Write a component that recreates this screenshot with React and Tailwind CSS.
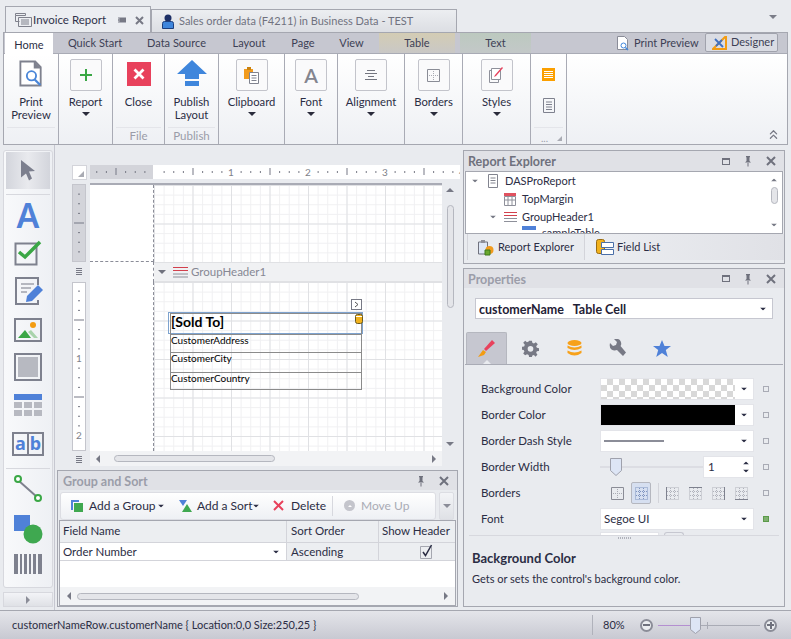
import { ChevronsUp } from 'lucide-react';

const Tri = ({ dir = 'down', className = '' }) => {
  const pts = { down: '0,0 8,0 4,4', up: '0,4 8,4 4,0', left: '4,0 4,8 0,4', right: '0,0 0,8 4,4' }[dir];
  const vert = dir === 'left' || dir === 'right';
  return (
    <svg width={vert ? 4 : 8} height={vert ? 8 : 4} className={`shrink-0 ${className}`}>
      <polygon points={pts} fill="currentColor" />
    </svg>
  );
};

const PanelCtl = ({ max = true }) => (
  <div className="flex items-center gap-[12px] text-[#6f717d]">
    {max && <div className="w-[8px] h-[7px] border border-[#6f717d] border-t-2" />}
    <svg width="12" height="12" viewBox="0 0 12 12"><path d="M4 1h4v1l-.5.5V6L9 7.5H3L4.500 6V2.500L4 2zM5.500 8h1v3.500h-1z" fill="currentColor" /></svg>
    <svg width="10" height="10" viewBox="0 0 10 10"><path d="M1 1l8 8M9 1l-8 8" stroke="currentColor" strokeWidth="2" /></svg>
  </div>
);

const PageIcon = ({ size = 14 }) => (
  <svg width={size} height={size} viewBox="0 0 14 14" fill="none" stroke="#82848f"><path d="M2.500.5h9v13h-9zM4.500 4h5M4.500 6.500h5M4.500 9h5" /></svg>
);

function RibbonGroup({ w, caption, children, last }) {
  return (
    <div className={`flex flex-col items-center h-full relative ${last ? '' : 'border-r border-[#a9abb5]'} ${w}`}>
      {children}
      {caption && (
        <div className="absolute left-[3px] right-[3px] top-[73px] text-center pt-[1px] h-[17px] leading-[14px] text-[#9a9ca8] text-[11.500px] border-t border-[#e4e5ea]">{caption}</div>
      )}
    </div>
  );
}

function BoxButton({ label, children }) {
  return (
    <>
      <div className="mt-[5px] w-[32px] h-[32px] border border-[#c3c4cb] rounded-[2px] flex items-center justify-center bg-[#fafafb]">{children}</div>
      <div className="leading-[16px] mt-[3px]">{label}</div>
      <Tri className="mt-[2px] text-[#2b2c3c]" />
    </>
  );
}

function DocTabs() {
  return (
    <div className="h-[32px] flex items-end pl-[5px] relative shrink-0">
      <div className="w-[146px] h-[26px] border border-b-0 border-[#a5a7b0] bg-[#eceef2] flex items-center pl-[9px] pt-[1px] relative z-10">
        <svg width="17" height="14" viewBox="0 0 17 14" fill="none" stroke="#7f818c"><path d="M.5.500h10v2h-10zM.5 2.500v6h4M3.500 4.500h13v9h-13zM6 7h8M6 9h8M6 11h8" /></svg>
        <span className="ml-[1px] w-[85px] text-[#30324a]">Invoice Report</span>
        <svg width="8" height="8" viewBox="0 0 8 8"><path d="M1 1v6M1 4h-1M2 2h6v4H2z" fill="#777985" stroke="#777985" /></svg>
        <svg className="ml-[9px]" width="9" height="9" viewBox="0 0 9 9"><path d="M1 1l7 7M8 1l-7 7" stroke="#777985" strokeWidth="2" /></svg>
      </div>
      <div className="w-[306px] h-[23px] border border-b-0 border-[#a5a7b0] bg-gradient-to-b from-[#eceef1] to-[#dcdee3] flex items-center pl-[10px]">
        <svg width="12" height="15" viewBox="0 0 12 15"><circle cx="6" cy="4" r="3.500" fill="#1d2f66" /><path d="M.5 14.500V9.500q0-2 2-2h7q2 0 2 2v5z" fill="#3f86dc" stroke="#1d3f7e" /></svg>
        <span className="ml-[5px] text-[11px] text-[#70727f]">Sales order data (F4211) in Business Data - TEST</span>
      </div>
      <Tri className="absolute left-[769px] top-[15px] text-[#7b7d88]" />
    </div>
  );
}

function Ribbon() {
  return (
    <div className="ml-[3px] w-[785px] h-[113px] border border-[#a5a7b0] flex flex-col shrink-0 relative">
      <div className="h-[21px] bg-[#c6c7d0] flex items-end relative text-[11px] text-[#3d3f55] shrink-0 border-b border-[#a9abb5]">
        <div className="ml-[1px] w-[48px] h-[21px] -mb-[1px] bg-white text-center leading-[23px] text-[#2b2d44] z-10">Home</div>
        <div className="flex h-full items-center text-center pt-[1px]">
          <span className="w-[84px]">Quick Start</span>
          <span className="w-[79px]">Data Source</span>
          <span className="w-[66px]">Layout</span>
          <span className="w-[42px]">Page</span>
          <span className="w-[55px]">View</span>
        </div>
        <div className="w-[76px] h-full pt-[1px] bg-gradient-to-b from-[#d3ccb4] to-[#c9c8c6] flex items-center justify-center">Table</div>
        <div className="ml-[5px] w-[71px] h-full pt-[1px] bg-gradient-to-b from-[#bcc9bf] to-[#c3c8c8] flex items-center justify-center">Text</div>
        <div className="flex h-full items-center ml-[85px] w-[89px]">
          <svg width="14" height="15" viewBox="0 0 14 15" fill="none"><path d="M1.500.5h7l3 3v10h-10z" fill="#fff" stroke="#8a8c98" /><circle cx="7.500" cy="9.500" r="2.500" stroke="#3f86dc" /><path d="M9.500 11.500l2.500 2.500" stroke="#3f86dc" strokeWidth="1.500" /></svg>
          <span className="ml-[4px]">Print Preview</span>
        </div>
        <div className="w-[73px] h-[19px] mb-[1px] border border-[#a0a2ac] rounded-[2px] bg-[#dadce3] flex items-center pl-[6px]">
          <svg width="15" height="14" viewBox="0 0 15 14"><path d="M14 0v13H1z" fill="none" stroke="#f39c12" strokeWidth="2" /><path d="M3 3l8 8M10 4l-6 6" stroke="#3f6fc0" strokeWidth="1.800" /></svg>
          <span className="ml-[4px]">Designer</span>
        </div>
      </div>
      <div className="flex-1 bg-gradient-to-b from-white to-[#eef0f4] flex text-[11.250px] text-[#2b2d44]">
        <RibbonGroup w="w-[55px]">
          <svg className="mt-[6px]" width="24" height="27" viewBox="0 0 26 29" fill="none"><path d="M1.500 1.500h16l6 6v20h-22z" stroke="#7e818e" strokeWidth="2" fill="#fff" /><path d="M16 1l8 8h-8z" fill="#7e818e" /><circle cx="13.500" cy="17" r="5" stroke="#4a86d8" strokeWidth="2" fill="#fff" /><path d="M17 21l6 6" stroke="#4a86d8" strokeWidth="2.500" /></svg>
          <div className="text-center leading-[13px] mt-[8px]">Print<br />Preview</div>
          <div className="absolute left-[3px] right-[3px] top-[73px] border-t border-[#e4e5ea]" />
        </RibbonGroup>
        <RibbonGroup w="w-[54px]">
          <BoxButton label="Report">
            <svg width="14" height="14" viewBox="0 0 14 14"><path d="M7 1v12M1 7h12" stroke="#3aa745" strokeWidth="2" /></svg>
          </BoxButton>
        </RibbonGroup>
        <RibbonGroup w="w-[52px]" caption="File">
          <div className="mt-[8px] w-[24px] h-[24px] bg-[#e8415c] flex items-center justify-center">
            <svg width="12" height="12" viewBox="0 0 12 12"><path d="M1.500 1.500l9 9M10.500 1.500l-9 9" stroke="#fff" strokeWidth="2.800" /></svg>
          </div>
          <div className="mt-[8px] leading-[16px]">Close</div>
        </RibbonGroup>
        <RibbonGroup w="w-[54px]" caption="Publish">
          <svg className="mt-[6px]" width="30" height="27" viewBox="0 0 30 27"><path d="M15 0l15 14H22v5H8v-5H0z" fill="#3f86dc" /><path d="M8 21h14v5H8z" fill="#3f86dc" /></svg>
          <div className="text-center leading-[13px] mt-[8px]">Publish<br />Layout</div>
        </RibbonGroup>
        <RibbonGroup w="w-[66px]">
          <BoxButton label="Clipboard">
            <svg width="15" height="17" viewBox="0 0 15 17"><path d="M0 2h9v10H0z" fill="#f29b1d" /><path d="M3 0h4v3H3z" fill="#c9820f" /><path d="M5.500 5.500h9v11h-9z" fill="#fff" stroke="#80838f" /><path d="M7.500 8.500h5M7.500 11h5M7.500 13.500h5" stroke="#80838f" /></svg>
          </BoxButton>
        </RibbonGroup>
        <RibbonGroup w="w-[53px]">
          <BoxButton label="Font">
            <span className="text-[20px] leading-none font-semibold text-[#83858f]">A</span>
          </BoxButton>
        </RibbonGroup>
        <RibbonGroup w="w-[67px]">
          <BoxButton label="Alignment">
            <svg width="12" height="11" viewBox="0 0 12 11"><path d="M2 .5h8M0 3.500h12M3 6.500h6M0 9.500h12" stroke="#73757f" /></svg>
          </BoxButton>
        </RibbonGroup>
        <RibbonGroup w="w-[58px]">
          <BoxButton label="Borders">
            <svg width="13" height="13" viewBox="0 0 13 13" fill="none"><path d="M.5.5h12v12H.5z" stroke="#8a8c96" /><path d="M6.500 2v9M2 6.500h9" stroke="#a9abb3" strokeDasharray="1 1" /></svg>
          </BoxButton>
        </RibbonGroup>
        <RibbonGroup w="w-[68px]">
          <BoxButton label="Styles">
            <svg width="15" height="16" viewBox="0 0 15 16" fill="none"><path d="M.5 3.500h9v12h-9z" stroke="#8e909a" /><path d="M2.500 1.500h9v11h-9z" stroke="#8e909a" fill="#fff" /><path d="M5 10l2-1 7-8-1-1-7 8z" fill="#e8415c" /></svg>
          </BoxButton>
        </RibbonGroup>
        <RibbonGroup w="w-[36px]">
          <div className="mt-[14px] w-[13px] h-[13px] bg-[#fb9f00] flex items-center justify-center">
            <svg width="9" height="9" viewBox="0 0 9 9"><path d="M0 1.500h9M0 3.500h9M0 5.500h9M0 7.500h9" stroke="#fff" /></svg>
          </div>
          <svg className="mt-[17px]" width="12" height="15" viewBox="0 0 12 15" fill="none"><path d="M.5.500h11v14H.5zM3 4h6M3 6.500h6M3 9h6M3 11.500h6" stroke="#7e818e" /></svg>
          <div className="absolute left-[3px] right-[3px] top-[73px] h-[17px] border-t border-[#e4e5ea] flex items-end justify-between pl-[7px] pr-[1px] pb-[3px] text-[#9a9ca8]">
            <span className="leading-[6px] text-[10px]">...</span>
            <svg width="5" height="5"><polygon points="5,0 5,5 0,5" fill="#a9abb3" /></svg>
          </div>
        </RibbonGroup>
        <div className="flex-1 flex items-end justify-end pr-[6px] pb-[2px]">
          <ChevronsUp size={15} strokeWidth={2} className="text-[#767884]" />
        </div>
      </div>
    </div>
  );
}

function Toolbox() {
  const Item = ({ h, children }) => (
    <div className={`flex items-center justify-center ${h}`}>{children}</div>
  );
  return (
    <div className="w-[50px] ml-[3px] flex flex-col shrink-0 text-[#4f81d8]">
      <div className="h-[438px] border border-[#d7d8de] rounded-[3px] bg-gradient-to-r from-[#f8f9fb] to-[#eef0f4] flex flex-col px-[2px] pt-[1px] overflow-hidden">
        <Item h="h-[37px] shrink-0 bg-gradient-to-r from-[#d3d5dc] via-[#e9eaee] to-[#d3d5dc]">
          <svg width="15" height="21" viewBox="0 0 15 21"><path d="M0 0l14 11-6 .5 3 7-3 2-3-7-5 4z" fill="#7c7f8e" /></svg>
        </Item>
        <div className="h-[2px] shrink-0 border-t border-[#d7d8de] mt-[5px]" />
        <Item h="h-[38px] shrink-0"><span className="text-[34px] leading-none font-semibold font-['Noto_Sans']">A</span></Item>
        <Item h="h-[37px] shrink-0">
          <svg width="28" height="26" viewBox="0 0 28 26" fill="none"><path d="M1.500 3.500h21v21h-21z" stroke="#7e818e" strokeWidth="2" /><path d="M5 12l6 5L26 2" stroke="#3aa745" strokeWidth="3.500" /></svg>
        </Item>
        <Item h="h-[40px] shrink-0">
          <svg className="ml-[3px]" width="29" height="28" viewBox="0 0 29 28" fill="none"><path d="M23 8V1H1v26h22v-4" stroke="#7e818e" strokeWidth="2" /><path d="M6 7h13M6 11h10M6 15h6" stroke="#b5b7bf" strokeWidth="2" /><path d="M11 25l1-6L23 8l5 5-11 11z" fill="#4f81d8" /></svg>
        </Item>
        <Item h="h-[37px] shrink-0">
          <svg width="28" height="24" viewBox="0 0 28 24" fill="none"><path d="M1 1h26v22H1z" stroke="#7e818e" strokeWidth="2" /><circle cx="19" cy="7" r="3" fill="#f39c12" /><path d="M4 20l7-8 6 8z" fill="#3aa745" /><path d="M14 14l3-2 7 8h-4z" fill="#a9d3ac" /></svg>
        </Item>
        <Item h="h-[38px] shrink-0">
          <svg width="28" height="28" viewBox="0 0 28 28"><path d="M1 1h26v26H1z" fill="none" stroke="#7e818e" strokeWidth="2" /><path d="M4 4h20v20H4z" fill="#b7b9c1" /></svg>
        </Item>
        <Item h="h-[37px] shrink-0">
          <svg width="28" height="22" viewBox="0 0 28 22"><path d="M0 0h28v6H0z" fill="#4f81d8" /><path d="M0 8h8v6H0zM10 8h8v6h-8zM20 8h8v6h-8zM0 16h8v6H0zM10 16h8v6h-8zM20 16h8v6h-8z" fill="#b7b9c1" /></svg>
        </Item>
        <Item h="h-[41px] shrink-0">
          <div className="w-[32px] h-[24px] border-2 border-[#7e818e] flex text-[18px] leading-[19px] font-bold font-['Noto_Sans']">
            <span className="flex-1 text-center border-r-2 border-[#7e818e]">a</span>
            <span className="flex-1 text-center">b</span>
          </div>
        </Item>
        <div className="h-[1px] shrink-0 bg-[#d7d8de] mt-[4px]" />
        <Item h="h-[40px] shrink-0">
          <svg width="30" height="28" viewBox="0 0 30 28" fill="none"><path d="M6 6l18 16" stroke="#7e818e" strokeWidth="2" /><circle cx="5" cy="4" r="3" stroke="#3aa745" strokeWidth="2" fill="#fff" /><circle cx="25" cy="23" r="3" stroke="#3aa745" strokeWidth="2" fill="#fff" /></svg>
        </Item>
        <Item h="h-[40px] shrink-0">
          <svg width="29" height="29" viewBox="0 0 29 29"><path d="M0 0h16v16H0z" fill="#4f81d8" /><circle cx="19" cy="19" r="9.500" fill="#3fa850" /></svg>
        </Item>
        <Item h="h-[30px] shrink-0">
          <svg width="28" height="20" viewBox="0 0 28 20"><path d="M0 0h4v20H0zM6 0h2v20H6zM10 0h3v20h-3zM15 0h2v20h-2zM19 0h3v20h-3zM24 0h4v20h-4z" fill="#7e818e" /></svg>
        </Item>
      </div>
      <div className="mt-[4px] h-[15px] border border-[#d7d8de] bg-gradient-to-b from-[#f3f4f7] to-[#dfe1e6] flex items-center justify-center text-[#8b8d98]">
        <Tri dir="right" />
      </div>
    </div>
  );
}

function HRuler() {
  const base = 64;
  const step = 9.625;
  const marks = Array.from({ length: 45 }, (_, i) => i - 6);
  return (
    <svg width="370" height="14" className="block">
      <rect width="370" height="14" fill="#fff" />
      <rect width="63" height="14" fill="#d3d4da" />
      {marks.map((k) => {
        const x = base + k * step;
        if (k === 0 || x < 2) return null;
        if (k % 8 === 0 && k > 0) return <text key={k} x={x} y="11" fontSize="10" textAnchor="middle" fill="#7d7f8a">{k / 8}</text>;
        if (k % 4 === 0) return <rect key={k} x={x} y="3" width="1" height="7" fill="#777985" />;
        return <rect key={k} x={x} y="6" width="1" height="2" fill="#777985" />;
      })}
    </svg>
  );
}

function VRuler({ h, origin, gray }) {
  const marks = Array.from({ length: 22 }, (_, i) => i + 1);
  return (
    <svg width="14" height={h} className="block border border-[#c4c5cc]">
      <rect width="14" height={h} fill={gray ? '#d3d4da' : '#fff'} />
      {marks.map((k) => {
        const y = origin + k * 9.625;
        if (y > h - 8) return null;
        if (k % 8 === 0) return <text key={k} x="6" y={y + 4} fontSize="10" textAnchor="middle" fill="#7d7f8a">{k / 8}</text>;
        if (k % 4 === 0) return <rect key={k} x="1" y={y} width="10" height="1" fill="#777985" />;
        return <rect key={k} x="5" y={y} width="2" height="1" fill="#777985" />;
      })}
    </svg>
  );
}

const Grip = () => (
  <svg width="8" height="8" viewBox="0 0 8 8" className="text-[#777985]"><path d="M1 .5h6M1 2.500h6M1 4.500h6M1 6.500h6" stroke="currentColor" /></svg>
);

const gridBg = "bg-[linear-gradient(#e0e1e4_1px,transparent_1px),linear-gradient(90deg,#e0e1e4_1px,transparent_1px),linear-gradient(#f0f0f2_1px,transparent_1px),linear-gradient(90deg,#f0f0f2_1px,transparent_1px)] bg-[size:38.5px_38.5px,38.5px_38.5px,9.625px_9.625px,9.625px_9.625px]";

function Designer() {
  return (
    <div className="h-[321px] flex shrink-0">
      <div className="w-[35px] flex flex-col items-center pl-[16px] pr-[3px] shrink-0">
        <div className="mt-[20px] w-[15px] h-[15px] shrink-0 bg-white border border-[#d3d4da] flex items-end justify-end p-[2px]">
          <svg width="6" height="6"><polygon points="6,0 6,6 0,6" fill="#a9abb3" /></svg>
        </div>
        <div className="mt-[4px]"><VRuler h={78} origin={-1} gray /></div>
        <div className="h-[20px] flex items-center"><Grip /></div>
        <VRuler h={169} origin={-2} />
        <div className="mt-[5px]"><Grip /></div>
      </div>
      <div className="flex-1 flex flex-col min-w-0">
        <div className="mt-[20px] h-[18px] shrink-0 w-[370px]"><HRuler /></div>
        <div className="h-[268px] flex shrink-0">
          <div className="w-[352px] border-t-2 border-[#a9abb5] flex flex-col bg-white">
            <div className="h-[77px] flex">
              <div className="w-[64px] border-r border-b border-dashed border-[#8b8d98]" />
              <div className={`flex-1 ${gridBg}`} />
            </div>
            <div className="h-[20px] flex">
              <div className="w-[64px] border-r border-dashed border-[#8b8d98]" />
              <div className="flex-1 bg-[#f0f1f3] border-y border-[#e0e1e4] flex items-center pl-[4px] text-[#868894]">
                <Tri className="text-[#6f717d]" />
                <svg className="ml-[7px]" width="15" height="11" viewBox="0 0 15 11"><path d="M0 .5h15M0 3.500h15" stroke="#d2404d" /><path d="M0 7h15M0 10h15" stroke="#8e909a" /></svg>
                <span className="ml-[3px]">GroupHeader1</span>
              </div>
            </div>
            <div className="flex-1 flex">
              <div className="w-[64px] border-r border-dashed border-[#8b8d98]" />
              <div className={`flex-1 relative ${gridBg}`}>
                <div className="absolute left-[197px] top-[17px] w-[11px] h-[11px] bg-white border border-[#777985] flex items-center justify-center">
                  <svg width="5" height="7" viewBox="0 0 5 7" fill="none"><path d="M1 1l3 2.500L1 6" stroke="#555" /></svg>
                </div>
                <div className="absolute left-[14px] top-[30px] w-[195px] h-[22px] border border-[#7ea3cf]" />
                <div className="absolute left-[16px] top-[31px] w-[192px] h-[77px] border border-[#8b8b8b] flex flex-col text-black text-[10px]">
                  <div className="h-[21px] border-b border-[#8b8b8b] font-bold text-[14px] leading-[16px]">[Sold To]</div>
                  <div className="h-[18px] border-b border-[#8b8b8b] leading-[11px]">CustomerAddress</div>
                  <div className="h-[20px] border-b border-[#8b8b8b] leading-[11px]">CustomerCity</div>
                  <div className="flex-1 leading-[10px]">CustomerCountry</div>
                </div>
                <svg className="absolute left-[201px] top-[32px]" width="8" height="10" viewBox="0 0 8 10"><rect x=".5" y=".5" width="7" height="9" rx="2" fill="#f2b21c" stroke="#6b5a20" /><path d="M1 2.500h6" stroke="#fff" /></svg>
              </div>
            </div>
          </div>
          <div className="w-[16px] flex flex-col items-center text-[#777985] pt-[5px] pb-[5px]">
            <Tri dir="up" />
            <div className="mt-[13px] w-[7px] h-[103px] rounded-[4px] border border-[#b5b7bf] bg-[#e4e5e9]" />
            <div className="mt-auto"><Tri /></div>
          </div>
        </div>
        <div className="h-[15px] w-[352px] bg-[#f2f3f5] flex items-center pl-[6px] text-[#777985] shrink-0">
          <Tri dir="left" />
          <div className="ml-[14px] w-[161px] h-[7px] rounded-[4px] border border-[#b5b7bf] bg-[#e4e5e9]" />
          <div className="ml-auto mr-[6px]"><Tri dir="right" /></div>
        </div>
      </div>
    </div>
  );
}

function GroupSort() {
  return (
    <div className="mt-[4px] ml-[2px] w-[401px] h-[137px] border border-[#a5a7b0] flex flex-col shrink-0">
      <div className="h-[19px] bg-[#e0e1e6] flex items-center justify-between pl-[5px] pr-[8px] shrink-0">
        <span className="font-bold text-[12.500px] leading-[15px] pt-[2px] text-[#9b9da9]">Group and Sort</span>
        <PanelCtl max={false} />
      </div>
      <div className="h-[30px] flex items-center pl-[2px] pt-[1px] shrink-0 bg-[#e9ebef]">
        <div className="w-[376px] h-[28px] rounded-[3px] border border-[#dcdde3] bg-gradient-to-b from-white to-[#eef0f4] flex items-center pl-[10px] text-[12px] text-[#2b2d44]">
          <svg width="12" height="12" viewBox="0 0 12 12"><path d="M0 0h8v2H2v8H0z" fill="#4f81d8" /><path d="M3 3h9v9H3z" fill="#3fa850" /></svg>
          <span className="ml-[6px] w-[68px]">Add a Group</span>
          <Tri className="scale-75" />
          <svg className="ml-[14px]" width="13" height="12" viewBox="0 0 13 12"><path d="M0 0h8L4 6z" fill="#4f81d8" /><path d="M8 4l5 8H3z" fill="#3fa850" /></svg>
          <span className="ml-[5px] w-[55px]">Add a Sort</span>
          <Tri className="scale-75" />
          <svg className="ml-[13px]" width="11" height="11" viewBox="0 0 11 11"><path d="M1 1l9 9M10 1l-9 9" stroke="#e8415c" strokeWidth="2" /></svg>
          <span className="ml-[7px] w-[33px]">Delete</span>
          <div className="ml-[8px] w-px h-[20px] bg-[#d7d8de]" />
          <div className="ml-[11px] w-[11px] h-[11px] rounded-full bg-[#c4c5cc] flex items-center justify-center">
            <Tri dir="up" className="text-white scale-50" />
          </div>
          <span className="ml-[6px] text-[#a9abb5]">Move Up</span>
        </div>
        <div className="ml-[3px] w-[15px] h-[28px] rounded-[2px] border border-[#dcdde3] bg-gradient-to-b from-[#f3f4f7] to-[#dfe1e6] flex items-center justify-center text-[#8b8d98]">
          <Tri />
        </div>
      </div>
      <div className="mx-[1px] flex-1 border border-[#a5a7b0] bg-white flex flex-col text-[#2b2d44] min-h-0">
        <div className="h-[21px] flex bg-[#eceef1] shrink-0">
          <div className="w-[227px] pl-[3px] border-r border-[#d3d4da] leading-[20px]">Field Name</div>
          <div className="w-[92px] pl-[4px] border-r border-[#d3d4da] leading-[20px]">Sort Order</div>
          <div className="flex-1 pl-[3px] leading-[20px]">Show Header</div>
        </div>
        <div className="h-[19px] flex border-y border-[#d3d4da] shrink-0">
          <div className="w-[227px] pl-[3px] pr-[6px] border-r border-[#d3d4da] flex items-center justify-between">
            <span>Order Number</span><Tri className="scale-75" />
          </div>
          <div className="w-[92px] pl-[4px] border-r border-[#d3d4da] bg-[#eceef1] leading-[17px]">Ascending</div>
          <div className="flex-1 bg-[#eceef1] flex items-center justify-center pl-[18px]">
            <svg width="13" height="15" viewBox="0 0 13 15" fill="none"><path d="M.5 2.500h11v12H.5z" stroke="#a5a7b0" /><path d="M3 8l2.500 3.500L11.500 1" stroke="#2b2d44" strokeWidth="1.500" /></svg>
          </div>
        </div>
        <div className="flex-1" />
        <div className="h-[18px] bg-[#f2f3f5] flex items-center pl-[7px] pr-[7px] text-[#777985] shrink-0">
          <Tri dir="left" />
          <div className="ml-[6px] w-[282px] h-[7px] rounded-[4px] border border-[#b5b7bf] bg-[#e4e5e9]" />
          <div className="ml-auto"><Tri dir="right" /></div>
        </div>
      </div>
    </div>
  );
}

function ReportExplorer() {
  return (
    <div className="h-[114px] border border-[#a5a7b0] flex flex-col text-[11px] text-[#2b2d44] shrink-0">
      <div className="h-[20px] bg-[#e0e1e6] flex items-center justify-between pl-[4px] pr-[8px] shrink-0">
        <span className="font-bold text-[12.500px] leading-[15px] pt-[1px] text-[#6f717d]">Report Explorer</span>
        <PanelCtl />
      </div>
      <div className="mx-[1px] h-[63px] border border-[#a5a7b0] bg-white flex overflow-hidden shrink-0">
        <div className="flex-1 flex flex-col relative">
          <div className="h-[18px] flex items-center pl-[5px] shrink-0"><Tri className="text-[#777985] scale-75" /><div className="ml-[7px]"><PageIcon /></div><span className="ml-[5px]">DASProReport</span></div>
          <div className="h-[18px] flex items-center pl-[38px] shrink-0">
            <svg width="12" height="13" viewBox="0 0 12 13" fill="none"><path d="M.5 3.500h11v9H.5zM4 3.500v9M8 3.500v9M.5 7h11" stroke="#8e909a" /><path d="M0 0h12v3H0z" fill="#e0525f" /></svg>
            <span className="ml-[6px]">TopMargin</span>
          </div>
          <div className="h-[18px] flex items-center pl-[23px] shrink-0"><Tri className="text-[#777985] scale-75" /><svg className="ml-[7px]" width="13" height="11" viewBox="0 0 13 11"><path d="M0 .5h13M0 3.500h13" stroke="#d2404d" /><path d="M0 6.500h13M0 9.500h13" stroke="#8e909a" /></svg><span className="ml-[5px]">GroupHeader1</span></div>
          <div className="h-[18px] flex items-start pl-[56px] shrink-0"><div className="w-[14px] h-[4px] bg-[#4f81d8]" /><span className="ml-[6px] -mt-[1px]">sampleTable</span></div>
        </div>
        <div className="w-[16px] flex flex-col items-center pt-[6px] pb-[6px] text-[#777985]">
          <Tri dir="up" className="scale-75" />
          <div className="mt-[5px] w-[7px] h-[17px] rounded-[4px] border border-[#b5b7bf] bg-[#e4e5e9]" />
          <div className="mt-auto"><Tri className="scale-75" /></div>
        </div>
      </div>
      <div className="h-[26px] flex items-stretch pl-[3px]">
        <div className="w-[118px] flex items-center pl-[9px] border-l border-[#d3d4da] border-r">
          <svg width="17" height="17" viewBox="0 0 17 17" fill="none"><path d="M1.500 3h9v12h-9z" stroke="#6f717d" fill="#dfe8f7" /><path d="M4 1h4v3H4z" fill="#8e909a" /><circle cx="12.500" cy="11" r="4" fill="#f29b1d" /><path d="M8 11h5v5H8z" fill="#6aa82f" stroke="#3d7a1a" /></svg>
          <span className="ml-[4px]">Report Explorer</span>
        </div>
        <div className="flex-1 flex items-center pl-[11px] bg-gradient-to-r from-[#eceef2] to-[#e0e1e6]">
          <svg width="18" height="16" viewBox="0 0 18 16" fill="none"><rect x=".5" y=".5" width="8" height="14" rx="2" fill="#f2b21c" stroke="#9a6b10" /><path d="M5.500 3.500h12v5h-12zM5.500 10.500h12v5h-12z" fill="#fff" stroke="#4a6fa8" /></svg>
          <span className="ml-[3px]">Field List</span>
        </div>
      </div>
    </div>
  );
}

function PropRow({ label, marker, children, h = 'h-[26px]' }) {
  return (
    <div className={`${h} flex items-center shrink-0`}>
      <div className="w-[136px] pl-[17px]">{label}</div>
      <div className="w-[154px] flex items-center">{children}</div>
      <div className={`ml-[9px] w-[6px] h-[6px] border ${marker ? 'border-[#5b9a4a] bg-[#7fb06f]' : 'border-[#a9abb5]'}`} />
    </div>
  );
}

function Combo({ children, className = '' }) {
  return (
    <div className="w-[154px] h-[22px] bg-white border border-[#e3e4e9] flex items-center text-[#2b2d44]">
      <div className={`flex-1 h-full min-w-0 ${className}`}>{children}</div>
      <Tri className="mx-[5px] scale-75 text-[#2b2d44]" />
    </div>
  );
}

function BorderGlyph({ side }) {
  const solid = { left: 'M.5 0v13', top: 'M0 .5h13', right: 'M12.500 0v13', bottom: 'M0 12.500h13' }[side];
  return (
    <svg width="13" height="13" viewBox="0 0 13 13" fill="none">
      <path d="M.5.5h12v12H.5zM4.500 1v11M8.500 1v11M1 4.500h11M1 8.500h11" stroke="#b0b2bb" strokeDasharray="1 1" />
      <path d={solid} stroke="#7e818e" />
    </svg>
  );
}

function Properties() {
  return (
    <div className="mt-[4px] h-[339px] border border-[#a5a7b0] flex flex-col text-[#2b2d44] shrink-0">
      <div className="h-[19px] bg-[#e0e1e6] flex items-center justify-between pl-[4px] pr-[8px] shrink-0">
        <span className="font-bold text-[12.500px] leading-[15px] pt-[2px] text-[#9b9da9]">Properties</span>
        <PanelCtl />
      </div>
      <div className="mt-[10px] mx-[11px] h-[21px] bg-white border border-[#c6c7d0] flex items-center pl-[3px] pr-[5px] justify-between shrink-0">
        <span className="font-bold text-[12.500px] leading-[15px] pt-[2px] text-[#1f2136]">customerName&nbsp;&nbsp; Table Cell</span>
        <Tri className="scale-75 text-[#2b2d44]" />
      </div>
      <div className="mt-[14px] h-[32px] mx-[1px] border-b border-[#a9abb5] flex items-end shrink-0 relative">
        <div className="ml-[1px] w-[41px] h-[32px] bg-[#c6c7d0] border border-b-0 border-[#b5b7bf] rounded-t-[2px] flex items-center justify-center relative">
          <svg width="19" height="19" viewBox="0 0 19 19"><path d="M7 10l8-9 3 3-9 8z" fill="#e8415c" /><path d="M6 11l3 2-2 3-6 2z" fill="#f39c12" /></svg>
          <Tri dir="up" className="absolute left-[16px] bottom-0 text-[#e9ebef]" />
        </div>
        <div className="flex items-center h-[32px] text-[#777985]">
          <svg className="ml-[15px]" width="17" height="17" viewBox="0 0 24 24"><path fill="currentColor" d="M10 1h4l.6 3 2.300 1 2.600-1.700 2.800 2.800L20 8.700l1 2.300 3 .6v4l-3 .2-1 2.300 1.800 2.600-2.800 2.800L16.900 21l-2.300 1-.6 2h-4l-.6-3-2.300-1-2.600 1.700L1.700 19l1.700-2.600-1-2.300-2.400-.5v-4l3-.6 1-2.300L1.700 4 4.500 1.200 7 3l2.400-1zM12 8.500a4 4 0 1 0 0 8 4 4 0 0 0 0-8z" /></svg>
          <svg className="ml-[28px]" width="15" height="17" viewBox="0 0 15 17"><ellipse cx="7.500" cy="3" rx="7" ry="3" fill="#f7a11a" /><path d="M.5 5.500q7 4 14 0V8q-7 4-14 0zM.5 10.500q7 4 14 0V13q-7 5-14 0z" fill="#f7a11a" /></svg>
          <svg className="ml-[27px]" width="18" height="18" viewBox="0 0 18 18"><path d="M1 4l3 3 3-1 1-3-3-3q5-1 6.500 2t0 5L17 13.500 14 17l-6-6q-3 1-5.500-.5T1 4z" fill="currentColor" /></svg>
          <svg className="ml-[26px]" width="18" height="17" viewBox="0 0 18 17"><path d="M9 0l2.500 6H18l-5.200 4 2 7L9 13l-5.800 4 2-7L0 6h6.500z" fill="#4f81d8" /></svg>
        </div>
      </div>
      <div className="mt-[11px] flex-1 flex flex-col min-h-0">
        <PropRow label="Background Color">
          <Combo className="bg-[repeating-conic-gradient(#d8d8d8_0_25%,#ffffff_0_50%)] bg-[size:12px_12px]" />
        </PropRow>
        <PropRow label="Border Color">
          <Combo className="bg-black" />
        </PropRow>
        <PropRow label="Border Dash Style">
          <Combo className="flex items-center pl-[3px]"><div className="w-[60px] h-[2px] bg-[#8b8d98]" /></Combo>
        </PropRow>
        <PropRow label="Border Width">
          <div className="w-[103px] h-[2px] bg-[#dcdde3] relative">
            <svg className="absolute left-[10px] -top-[8px]" width="12" height="18" viewBox="0 0 12 18"><path d="M.5.5h11v12l-5.500 5-5.500-5z" fill="#dde5f5" stroke="#9fa1ac" /></svg>
          </div>
          <div className="w-[51px] h-[22px] bg-white border border-[#e3e4e9] flex items-center justify-between pl-[4px] pr-[3px]">
            <span>1</span>
            <div className="flex flex-col gap-[4px]"><Tri dir="up" className="scale-75" /><Tri className="scale-75" /></div>
          </div>
        </PropRow>
        <PropRow label="Borders">
          <div className="ml-[11px] flex items-center">
            <svg width="13" height="13" viewBox="0 0 13 13" fill="none"><path d="M.5.5h12v12H.5z" stroke="#8a8c96" /><path d="M6.500 2v9M2 6.500h9" stroke="#a9abb3" strokeDasharray="1 1" /></svg>
            <div className="ml-[7px] w-[20px] h-[22px] rounded-[2px] border border-[#b5b7bf] bg-[#d6dff0] flex items-center justify-center">
              <svg width="13" height="13" viewBox="0 0 13 13" fill="none"><path d="M.5.5h12v12H.5zM4.500 1v11M8.500 1v11M1 4.500h11M1 8.500h11" stroke="#7f94c0" strokeDasharray="1 1" /></svg>
            </div>
            <div className="ml-[7px] w-px h-[20px] bg-[#d3d4da]" />
            <div className="ml-[7px] flex gap-[10px]">
              <BorderGlyph side="left" /><BorderGlyph side="top" /><BorderGlyph side="right" /><BorderGlyph side="bottom" />
            </div>
          </div>
        </PropRow>
        <PropRow label="Font" marker>
          <Combo className="leading-[20px] pl-[3px]">Segoe UI</Combo>
        </PropRow>
        <div className="h-[3px] ml-[136px] flex gap-[5px] shrink-0">
          <div className="w-[59px] bg-white border-x border-t border-[#e3e4e9]" />
          <div className="w-[20px] border-x border-t border-[#c6c7d0] rounded-t-[3px]" />
        </div>
        <div className="mx-[5px] border-t border-[#d7d8de] flex justify-center shrink-0">
          <div className="mt-[1px] w-[13px] h-[2px] border-y border-[#b0b2bb] border-dotted" />
        </div>
        <div className="mt-[11px] pl-[8px] font-bold text-[13px] leading-[16px]">Background Color</div>
        <div className="mt-[5px] pl-[8px] text-[11px] leading-[16px]">Gets or sets the control's background color.</div>
      </div>
    </div>
  );
}

function StatusBar() {
  return (
    <div className="h-[29px] bg-gradient-to-b from-[#e4e5ea] to-[#c8c9d2] border-t border-[#a5a7b0] flex items-center text-[11px] text-[#2b2d44] shrink-0">
      <span className="ml-[12px] w-[580px]">customerNameRow.customerName {'{'} Location:0,0 Size:250,25 {'}'}</span>
      <div className="w-px h-[20px] bg-[#b0b2bb]" />
      <span className="ml-[10px] w-[23px]">80%</span>
      <div className="ml-[14px] w-[13px] h-[13px] rounded-full border-2 border-[#8b8d98] bg-[#eceef1] flex items-center justify-center">
        <div className="w-[7px] h-[2px] bg-[#6f717d]" />
      </div>
      <div className="ml-[5px] w-[102px] h-[1px] bg-[#a9abb5] relative">
        <div className="absolute left-0 top-0 w-[35px] h-[1px] bg-[#b48fd0]" />
        <svg className="absolute left-[32px] -top-[8px]" width="11" height="17" viewBox="0 0 11 17"><path d="M.5.500h10v12l-5 4-5-4z" fill="#dde5f5" stroke="#9fa1ac" /></svg>
        <div className="absolute left-[49px] -top-[3px] w-px h-[7px] bg-[#a9abb5]" />
      </div>
      <div className="ml-[4px] w-[13px] h-[13px] rounded-full border-2 border-[#8b8d98] bg-[#eceef1] flex items-center justify-center relative">
        <div className="w-[7px] h-[2px] bg-[#6f717d]" />
        <div className="absolute w-[2px] h-[7px] bg-[#6f717d]" />
      </div>
    </div>
  );
}

export default function App() {
  return (
    <div className="w-[791px] h-[639px] bg-[#e9ebef] flex flex-col overflow-hidden whitespace-nowrap text-[11.500px] font-['Lato',sans-serif]">
      <DocTabs />
      <Ribbon />
      <div className="flex-1 flex min-h-0 pt-[5px]">
        <Toolbox />
        <div className="w-[405px] ml-[1px] border-l border-[#c6c7d0] flex flex-col -mt-[5px] shrink-0">
          <Designer />
          <GroupSort />
        </div>
        <div className="ml-[4px] w-[322px] flex flex-col shrink-0">
          <ReportExplorer />
          <Properties />
        </div>
      </div>
      <StatusBar />
    </div>
  );
}
